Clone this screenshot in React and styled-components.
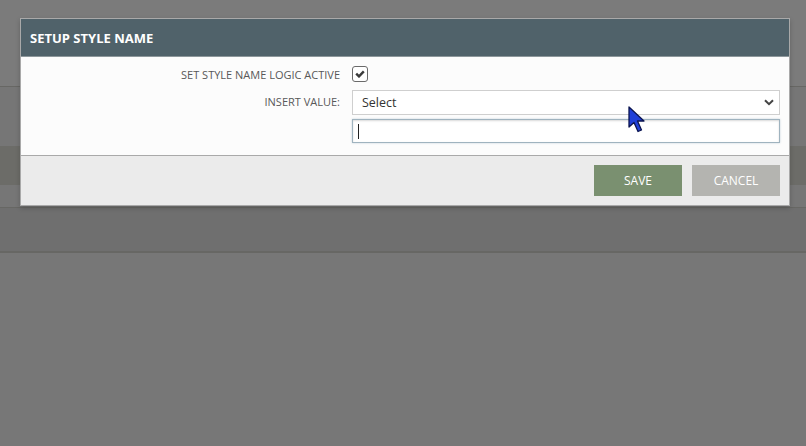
import React from 'react';
import styled, { createGlobalStyle } from 'styled-components';

const GlobalStyle = createGlobalStyle`
  *, *::before, *::after {
    box-sizing: border-box;
  }
  html, body {
    margin: 0;
    padding: 0;
    background: #777777;
    font-family: "Open Sans", "Noto Sans", "Liberation Sans", sans-serif;
  }
`;

const Page = styled.div`
  position: relative;
  width: 806px;
  height: 446px;
  overflow: hidden;
  background: #777777;
`;

const Band = styled.div`
  height: ${props => props.h}px;
  background: ${props => props.bg};
  border-bottom: ${props => (props.line ? `${props.line}px solid #676764` : 'none')};
`;

const Dialog = styled.div`
  position: absolute;
  top: 18px;
  left: 20px;
  width: 770px;
  border: 1px solid #a9a9a9;
  background: #ffffff;
  box-shadow: 0 2px 5px rgba(0, 0, 0, 0.2);
`;

const Header = styled.div`
  height: 38px;
  display: flex;
  align-items: center;
  padding-left: 9px;
  background: #50626a;
  border-bottom: 1px solid #8d979b;
  color: #ffffff;
  font-size: 13px;
  font-weight: 700;
`;

const Body = styled.div`
  display: grid;
  grid-template-columns: 319px 1fr;
  column-gap: 12px;
  align-items: center;
  padding: 9px 9px 12px 0;
  background: #fcfcfc;
`;

const Label = styled.label`
  justify-self: end;
  font-size: 11px;
  color: #585858;
  margin-top: ${props => props.mt || 0}px;
`;

const Control = styled.div`
  margin-top: ${props => props.mt || 0}px;
  display: flex;
  align-items: center;
`;

const CheckBox = styled.span`
  width: 16px;
  height: 16px;
  border: 1px solid #6a6a6a;
  border-radius: 3px;
  background: #ffffff;
  display: flex;
  align-items: center;
  justify-content: center;
`;

const SelectBox = styled.div`
  flex: 1;
  height: 25px;
  border: 1px solid #cfcfcf;
  background: #ffffff;
  display: flex;
  align-items: center;
  justify-content: space-between;
  padding: 0 5px 0 9px;
  font-size: 12.5px;
  color: #333333;
`;

const TextInput = styled.div`
  flex: 1;
  height: 24px;
  border: 1px solid #9fb3bf;
  background: #ffffff;
  box-shadow: inset 0 1px 2px rgba(0, 0, 0, 0.15), 0 0 2px rgba(120, 150, 170, 0.4);
  display: flex;
  align-items: center;
  padding-left: 5px;
`;

const Caret = styled.span`
  width: 1px;
  height: 15px;
  background: #222222;
`;

const Footer = styled.div`
  height: 50px;
  border-top: 1px solid #a9a9a9;
  background: #ebebeb;
  display: flex;
  justify-content: flex-end;
  align-items: flex-start;
  gap: 10px;
  padding: 9px 9px 0 0;
`;

const Button = styled.button`
  width: 88px;
  height: 31px;
  border: none;
  border-radius: 0;
  background: ${props => (props.primary ? '#7a9070' : '#b4b4b0')};
  color: #ffffff;
  font-family: inherit;
  font-size: 12px;
  padding: 0;
`;

const Pointer = styled.svg`
  position: absolute;
  left: 627px;
  top: 106px;
`;

const Check = () => (
  <svg width="10" height="8" viewBox="0 0 10 8">
    <path d="M1.2 3.6 L4 6.4 L8.8 1.4" fill="none" stroke="#3a3a3a" strokeWidth="2.4" />
  </svg>
);

const Chevron = () => (
  <svg width="10" height="7" viewBox="0 0 10 7">
    <path d="M1 1.2 L5 5.2 L9 1.2" fill="none" stroke="#444" strokeWidth="2" />
  </svg>
);

export default function App() {
  return (
    <>
      <GlobalStyle />
      <Page>
        <Band h={87} bg="#7b7b7b" line={1} />
        <Band h={59} bg="#767676" />
        <Band h={39} bg="#6c6c68" />
        <Band h={23} bg="#767676" line={1} />
        <Band h={45} bg="#6f6f6f" line={2} />

        <Dialog>
          <Header>SETUP STYLE NAME</Header>
          <Body>
            <Label>SET STYLE NAME LOGIC ACTIVE</Label>
            <Control>
              <CheckBox>
                <Check />
              </CheckBox>
            </Control>
            <Label mt={6}>INSERT VALUE:</Label>
            <Control mt={8}>
              <SelectBox>
                Select
                <Chevron />
              </SelectBox>
            </Control>
            <span />
            <Control mt={4}>
              <TextInput>
                <Caret />
              </TextInput>
            </Control>
          </Body>
          <Footer>
            <Button primary>SAVE</Button>
            <Button>CANCEL</Button>
          </Footer>
        </Dialog>

        <Pointer width="20" height="28" viewBox="0 0 20 28">
          <path
            d="M2 1 L2 21 L7 16.5 L11 25.5 L14.5 24 L10.5 15 L17 15 Z"
            fill="#1f3fd8"
            stroke="#0b1450"
            strokeWidth="1.3"
            strokeLinejoin="round"
          />
        </Pointer>
      </Page>
    </>
  );
}
